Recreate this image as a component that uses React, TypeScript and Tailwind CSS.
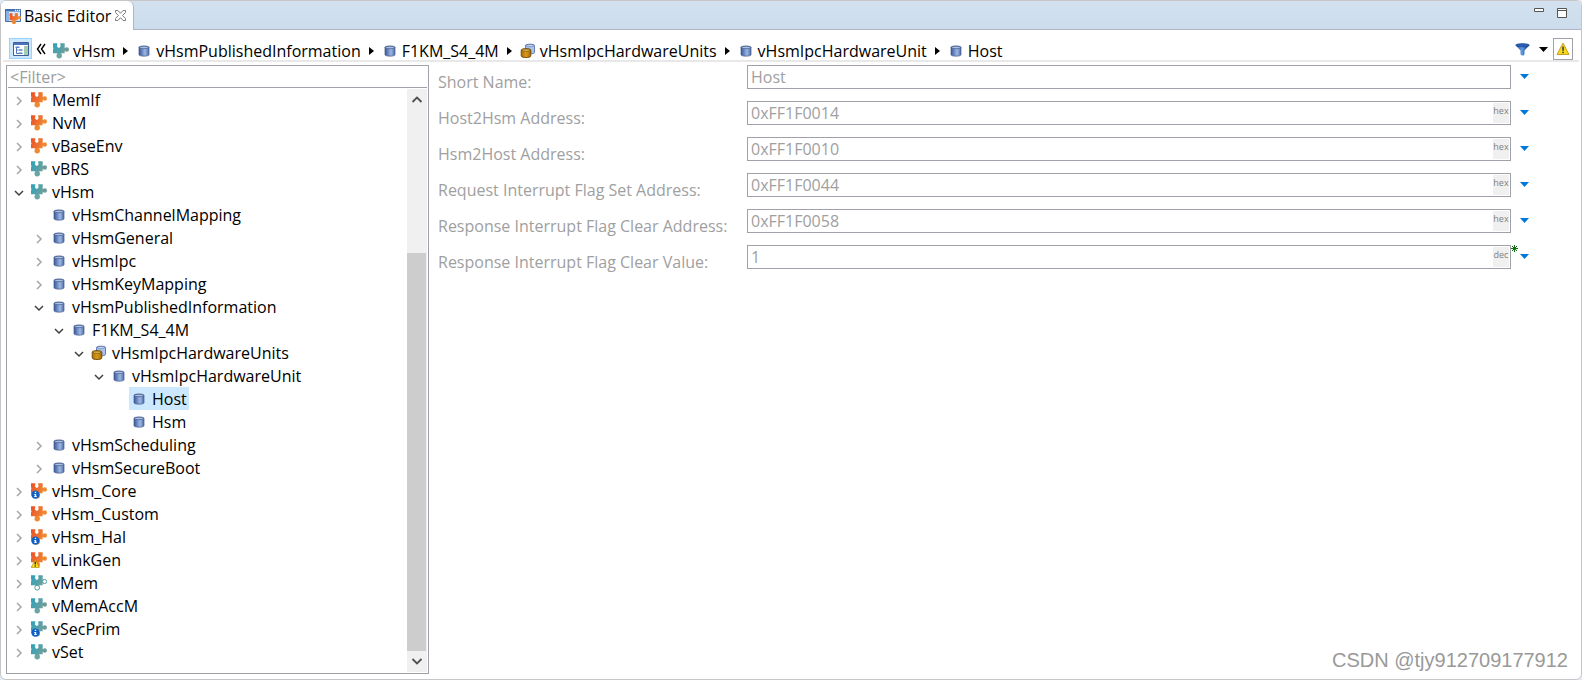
import { useState } from "react"

type IconKind = "module" | "service" | "serviceOpen" | "container" | "containers"
type Overlay = "info" | "warning"

interface TreeNode {
  name: string
  level: number
  icon: IconKind
  overlay?: Overlay
  state?: "open" | "closed"
}

interface Parameter {
  id: string
  label: string
  value: string
  format?: "hex" | "dec"
  modified?: boolean
}

const nodes: TreeNode[] = [
  { name: "MemIf", level: 0, icon: "module", state: "closed" },
  { name: "NvM", level: 0, icon: "module", state: "closed" },
  { name: "vBaseEnv", level: 0, icon: "module", state: "closed" },
  { name: "vBRS", level: 0, icon: "service", state: "closed" },
  { name: "vHsm", level: 0, icon: "service", state: "open" },
  { name: "vHsmChannelMapping", level: 1, icon: "container" },
  { name: "vHsmGeneral", level: 1, icon: "container", state: "closed" },
  { name: "vHsmIpc", level: 1, icon: "container", state: "closed" },
  { name: "vHsmKeyMapping", level: 1, icon: "container", state: "closed" },
  { name: "vHsmPublishedInformation", level: 1, icon: "container", state: "open" },
  { name: "F1KM_S4_4M", level: 2, icon: "container", state: "open" },
  { name: "vHsmIpcHardwareUnits", level: 3, icon: "containers", state: "open" },
  { name: "vHsmIpcHardwareUnit", level: 4, icon: "container", state: "open" },
  { name: "Host", level: 5, icon: "container" },
  { name: "Hsm", level: 5, icon: "container" },
  { name: "vHsmScheduling", level: 1, icon: "container", state: "closed" },
  { name: "vHsmSecureBoot", level: 1, icon: "container", state: "closed" },
  { name: "vHsm_Core", level: 0, icon: "module", overlay: "info", state: "closed" },
  { name: "vHsm_Custom", level: 0, icon: "module", state: "closed" },
  { name: "vHsm_Hal", level: 0, icon: "module", overlay: "info", state: "closed" },
  { name: "vLinkGen", level: 0, icon: "module", overlay: "warning", state: "closed" },
  { name: "vMem", level: 0, icon: "serviceOpen", state: "closed" },
  { name: "vMemAccM", level: 0, icon: "service", state: "closed" },
  { name: "vSecPrim", level: 0, icon: "service", overlay: "info", state: "closed" },
  { name: "vSet", level: 0, icon: "service", state: "closed" },
]

const crumbs: { name: string; icon: IconKind }[] = [
  { name: "vHsm", icon: "service" },
  { name: "vHsmPublishedInformation", icon: "container" },
  { name: "F1KM_S4_4M", icon: "container" },
  { name: "vHsmIpcHardwareUnits", icon: "containers" },
  { name: "vHsmIpcHardwareUnit", icon: "container" },
  { name: "Host", icon: "container" },
]

const parameters: Parameter[] = [
  { id: "short-name", label: "Short Name:", value: "Host" },
  { id: "host2hsm", label: "Host2Hsm Address:", value: "0xFF1F0014", format: "hex" },
  { id: "hsm2host", label: "Hsm2Host Address:", value: "0xFF1F0010", format: "hex" },
  { id: "request-set", label: "Request Interrupt Flag Set Address:", value: "0xFF1F0044", format: "hex" },
  { id: "response-clear", label: "Response Interrupt Flag Clear Address:", value: "0xFF1F0058", format: "hex" },
  { id: "clear-value", label: "Response Interrupt Flag Clear Value:", value: "1", format: "dec", modified: true },
]

const indent = ["pl-[3px]", "pl-[23px]", "pl-[43px]", "pl-[63px]", "pl-[83px]", "pl-[103px]"]

function PuzzleShape({ kind }: { kind: "module" | "service" | "serviceOpen" }) {
  const fill = kind === "module" ? "url(#puzzle-orange)" : "url(#puzzle-teal)"
  return (
    <>
      <path
        d="M0 .3h4.300v1.500a1.800 1.800 0 1 0 3 0V.3H11.700v4.900h1.300v2.600h-1.300V10.200H8.200v1.500H4.200v-1.500H0V6.500l.5-1.300L0 3.900z"
        fill={fill}
      />
      {kind === "serviceOpen" ? (
        <g fill="#fff" stroke="#4f9c9e">
          <circle cx="13.500" cy="6.500" r="2.100" />
          <circle cx="6.200" cy="12.700" r="2.400" />
        </g>
      ) : (
        <g>
          <circle cx="13.800" cy="6.500" r="2.200" fill={kind === "module" ? "#ef8a35" : "#6d9c98"} />
          <circle cx="6.200" cy="12.700" r="2.700" fill={kind === "module" ? "#f08a30" : "#6aa5a5"} />
        </g>
      )}
    </>
  )
}

function NodeIcon({ kind, overlay }: { kind: IconKind; overlay?: Overlay }) {
  return (
    <svg viewBox="0 0 16 16" className="size-4 shrink-0" aria-hidden="true">
      {kind === "container" && (
        <>
          <path d="M3 4.2C3 2.6 13 2.6 13 4.2v7.6c0 1.8-10 1.8-10 0z" fill="url(#cylinder-blue)" stroke="#41598f" strokeWidth=".7" />
          <ellipse cx="8" cy="4.5" rx="4.4" ry="1.2" fill="#a9c1e4" stroke="#3d4f80" strokeWidth=".6" />
        </>
      )}
      {kind === "containers" && (
        <>
          <path d="M5.5 2.4C5.5.8 14.5.8 14.5 2.4v7.2c0 1.6-9 1.6-9 0z" fill="#a8c4ec" stroke="#49659d" strokeWidth=".8" />
          <ellipse cx="10" cy="2.7" rx="3.8" ry="1" fill="#d2e1f7" stroke="#49659d" strokeWidth=".5" />
          <path d="M1.2 7c0-1.8 9.6-1.8 9.6 0v6c0 2-9.6 2-9.6 0z" fill="url(#cylinder-gold)" stroke="#6b4705" strokeWidth=".9" />
          <ellipse cx="6" cy="7.2" rx="4" ry="1.1" fill="#e9bd5c" stroke="#6b4705" strokeWidth=".6" />
        </>
      )}
      {(kind === "module" || kind === "service" || kind === "serviceOpen") && <PuzzleShape kind={kind} />}
      {overlay === "info" && (
        <>
          <circle cx="4.4" cy="11.6" r="4.2" fill="#0f5fc4" />
          <path d="M3.8 8.8h1.4v1.3H3.8zM3.1 10.9h2.1v2.3h.7v.9H3.1v-.9h.7v-1.4h-.7z" fill="#fff" />
        </>
      )}
      {overlay === "warning" && (
        <>
          <path d="M4.2 7.8 8.3 15.4H.2z" fill="#ffe21a" stroke="#b08c00" strokeWidth=".7" />
          <path d="M3.6 9.8h1.3v2.7H3.6zM3.6 13.2h1.3v1.2H3.6z" fill="#222" />
        </>
      )}
    </svg>
  )
}

function Gradients() {
  return (
    <svg className="absolute size-0" aria-hidden="true">
      <defs>
        <linearGradient id="puzzle-orange" x1="0" y1="0" x2="1" y2="0.4">
          <stop offset="0" stopColor="#e8502a" />
          <stop offset="1" stopColor="#f08432" />
        </linearGradient>
        <linearGradient id="puzzle-teal" x1="0" y1="0" x2="1" y2="0.5">
          <stop offset="0" stopColor="#2aa3bd" />
          <stop offset="1" stopColor="#6d9f9d" />
        </linearGradient>
        <linearGradient id="cylinder-blue">
          <stop offset="0" stopColor="#3c5796" />
          <stop offset=".35" stopColor="#6f8fc6" />
          <stop offset=".6" stopColor="#9db8e0" />
          <stop offset="1" stopColor="#4f6cab" />
        </linearGradient>
        <linearGradient id="cylinder-gold">
          <stop offset="0" stopColor="#a86f08" />
          <stop offset=".5" stopColor="#d99a1c" />
          <stop offset="1" stopColor="#a56c05" />
        </linearGradient>
        <linearGradient id="funnel-blue">
          <stop offset="0" stopColor="#1d4fa6" />
          <stop offset=".45" stopColor="#5f9be0" />
          <stop offset="1" stopColor="#0f2f78" />
        </linearGradient>
      </defs>
    </svg>
  )
}

function Twisty({ node }: { node: TreeNode }) {
  if (!node.state) return <span className="w-[22px] shrink-0" />
  return (
    <button
      type="button"
      aria-label={`${node.state === "open" ? "Collapse" : "Expand"} ${node.name}`}
      className="flex w-[22px] shrink-0 items-center pl-1"
    >
      <svg viewBox="0 0 10 10" className="mt-[2px] size-[10px]" fill="none" aria-hidden="true">
        {node.state === "open" ? (
          <path d="M1 3l4 4 4-4" stroke="#404040" strokeWidth="1.5" />
        ) : (
          <path d="M3 1l4 4-4 4" stroke="#a6a6a6" strokeWidth="1.5" />
        )}
      </svg>
    </button>
  )
}

function TabBar() {
  return (
    <header className="flex h-[29px] shrink-0 justify-between border-b border-[#b0b4c6] bg-linear-to-b from-[#d3e1ef] to-[#cbdcec]">
      <div className="-mb-px flex w-[133px] items-center gap-[3px] rounded-tr-md border-r border-[#b0b4c6] bg-white pl-1">
        <svg viewBox="0 0 16 16" className="size-4 shrink-0" aria-hidden="true">
          <path d="M.5 1.5h15v12H.5z" fill="#dcebfa" stroke="#4a6ea8" />
          <path d="M0 1h16v2.5H0z" fill="#3f6fb5" />
          <path d="M10 1.7h1.2v1.2H10zM12 1.7h1.2v1.2H12zM14 1.7h1.2v1.2H14z" fill="#fff" />
          <path d="M1 4h3v9H1z" fill="#8ab4e6" />
          <g transform="translate(4.5 5) scale(.72)">
            <PuzzleShape kind="module" />
          </g>
        </svg>
        <span className="whitespace-nowrap">Basic Editor</span>
        <button type="button" aria-label="Close Basic Editor" className="ml-px">
          <svg viewBox="0 0 12 12" className="size-[11px]" fill="#fff" stroke="#707070" aria-hidden="true">
            <path d="M.5.5h2.7L6 3.6 8.8.5h2.7v2.2L8.3 6l3.2 3.3v2.2H8.8L6 8.4l-2.8 3.1H.5V9.3L3.7 6 .5 2.7z" />
          </svg>
        </button>
      </div>
      <div className="flex items-start gap-3 pt-[7px] pr-[13px]">
        <button type="button" aria-label="Minimize">
          <svg viewBox="0 0 11 11" className="size-[11px]" aria-hidden="true">
            <path d="M.5.5h9v3h-9z" fill="#fff" stroke="#555" />
          </svg>
        </button>
        <button type="button" aria-label="Maximize">
          <svg viewBox="0 0 11 11" className="size-[11px]" aria-hidden="true">
            <path d="M.5.5h9v9h-9zM.5 2.5h9" fill="#fff" stroke="#555" />
          </svg>
        </button>
      </div>
    </header>
  )
}

function Breadcrumbs() {
  return (
    <div className="mx-[2px] flex h-8 shrink-0 items-start overflow-hidden border-b-2 border-[#e8e8e8] pt-2 pr-[6px] pl-[6px]">
      <button
        type="button"
        aria-label="Show tree"
        className="flex h-[21px] w-[23px] shrink-0 items-center justify-center border border-[#99d1ff] bg-[#cce8ff]"
      >
        <svg viewBox="0 0 16 14" className="h-[14px] w-4" aria-hidden="true">
          <path d="M.5.5h15v13H.5z" fill="#fff" stroke="#3d5f9c" />
          <path d="M1 1h14v2H1z" fill="#4d74b8" />
          <path d="M11 4h4v9h-4z" fill="#a3cdb0" />
          <path d="M3.5 5v6.5H6M3.5 8H5" stroke="#5479b8" fill="none" />
          <path d="M2.5 4.5h4v1.6h-4zM5.5 7.3h4v1.5h-4zM5.5 10.5h4V12h-4z" fill="#5c83c4" />
        </svg>
      </button>
      <button type="button" aria-label="Show hidden levels" className="ml-1 flex h-[21px] w-[17px] shrink-0 items-center">
        <svg viewBox="0 0 10 12" className="h-3 w-[10px]" fill="none" stroke="#000" strokeWidth="1.4" aria-hidden="true">
          <path d="M5 1L1.5 6 5 11M9 1L5.500 6 9 11" />
        </svg>
      </button>
      <nav aria-label="Breadcrumb" className="flex min-w-0 flex-1">
        {crumbs.map((crumb, index) => (
          <div key={crumb.name} className="flex shrink-0 items-start">
            {index > 0 && (
              <svg viewBox="0 0 5 8" className="mx-2 mt-[9px] h-2 w-[5px]" aria-hidden="true">
                <path d="M0 0l5 4-5 4z" />
              </svg>
            )}
            <a href="#" className="flex items-start gap-1">
              <span className="pt-[5px]">
                <NodeIcon kind={crumb.icon} />
              </span>
              <span className="leading-[26px]">{crumb.name}</span>
            </a>
          </div>
        ))}
      </nav>
      <div className="flex shrink-0 items-center">
        <button type="button" aria-label="Filter parameters" className="mr-[9px]">
          <svg viewBox="0 0 15 13" className="h-[13px] w-[15px]" aria-hidden="true">
            <path d="M.8 2.500L5.500 7.600v3.600l1.400 1.300h1.600l1-1.300V7.600L14.200 2.500z" fill="url(#funnel-blue)" />
            <ellipse cx="7.500" cy="2.200" rx="6.900" ry="1.600" fill="#2b5fb4" stroke="#173f8c" strokeWidth=".6" />
          </svg>
        </button>
        <button type="button" aria-label="Filter menu" className="mr-[5px]">
          <svg viewBox="0 0 9 5" className="h-[5px] w-[9px]" aria-hidden="true">
            <path d="M0 0h9L4.500 5z" />
          </svg>
        </button>
        <button
          type="button"
          aria-label="Warnings"
          className="flex h-[22px] w-5 items-center justify-center border border-[#a0a0a8] bg-white"
        >
          <svg viewBox="0 0 14 14" className="size-[14px]" aria-hidden="true">
            <path d="M7 1L13 12.500H1z" fill="#f7d917" stroke="#c9a227" strokeLinejoin="round" />
            <path d="M6.300 4.500h1.500v4.300H6.300zM6.300 9.800h1.500v1.500H6.300z" fill="#33334d" />
          </svg>
        </button>
      </div>
    </div>
  )
}

function ScrollBar() {
  return (
    <div className="my-px mr-px flex w-5 shrink-0 flex-col bg-[#f0f0f0]" aria-hidden="true">
      <svg viewBox="0 0 20 21" className="h-[21px] w-5" fill="none" stroke="#505050" strokeWidth="1.800">
        <path d="M5.500 13L10 8.500 14.500 13" />
      </svg>
      <div className="flex-[143]" />
      <div className="mr-px flex-[398] bg-[#cdcdcd]" />
      <svg viewBox="0 0 20 21" className="h-[21px] w-5" fill="none" stroke="#505050" strokeWidth="1.800">
        <path d="M5.500 8L10 12.500 14.500 8" />
      </svg>
    </div>
  )
}

function ConfigTree() {
  const [selected, setSelected] = useState("Host")

  return (
    <section className="flex w-[423px] shrink-0 flex-col border border-[#a0a0a8]">
      <input
        type="text"
        aria-label="Filter"
        placeholder="<Filter>"
        className="mx-px h-[22px] border-b border-[#a0a0a8] px-[2px] outline-none placeholder:text-[#9d9d9d]"
      />
      <div className="flex flex-1">
        <ul className="min-w-0 flex-1">
          {nodes.map((node) => (
            <li key={node.name} className={`flex h-[23px] ${indent[node.level]}`}>
              <Twisty node={node} />
              <button
                type="button"
                onClick={() => setSelected(node.name)}
                className={`-ml-[3px] flex items-center gap-[5px] pr-[2px] pl-[2px] ${
                  selected === node.name ? "bg-[#cce8ff]" : ""
                }`}
              >
                <NodeIcon kind={node.icon} overlay={node.overlay} />
                <span className="whitespace-nowrap">{node.name}</span>
              </button>
            </li>
          ))}
        </ul>
        <ScrollBar />
      </div>
    </section>
  )
}

function ParameterRow({ parameter }: { parameter: Parameter }) {
  return (
    <div className="flex h-6">
      <label htmlFor={parameter.id} className="w-[309px] shrink-0 pt-[7px] whitespace-nowrap text-[#a0a0a0]">
        {parameter.label}
      </label>
      <div className="flex min-w-0 flex-1 border border-[#a0a0a8] p-px">
        <input
          id={parameter.id}
          type="text"
          defaultValue={parameter.value}
          disabled
          className="min-w-0 flex-1 px-[2px] text-[#a0a0a0]"
        />
        {parameter.format && (
          <span className="w-4 bg-[#f0f0f0] text-center text-[9px] leading-4 text-[#808080]">{parameter.format}</span>
        )}
      </div>
      <div className="flex w-[9px] shrink-0 justify-start">
        {parameter.modified && (
          <svg viewBox="0 0 7 7" className="size-[7px]" stroke="#107010" aria-label="Modified" role="img">
            <path d="M3.500 0v7M0 3.500h7M1 1l5 5M6 1L1 6" />
          </svg>
        )}
      </div>
      <button type="button" aria-label={`Menu for ${parameter.label}`} className="flex w-[9px] shrink-0 items-center pb-[2px]">
        <svg viewBox="0 0 9 5" className="h-[5px] w-[9px]" aria-hidden="true">
          <path d="M0 0h9L4.500 5z" fill="#0078d7" />
        </svg>
      </button>
    </div>
  )
}

export default function App() {
  return (
    <div className="flex min-h-screen bg-[#e4ebf8] font-['Open_Sans','Noto_Sans_CJK_SC',sans-serif] text-[16px] leading-5 text-black">
      <Gradients />
      <main className="relative flex min-w-0 flex-1 flex-col overflow-hidden rounded-md border border-[#c6c6c8] bg-white">
        <TabBar />
        <Breadcrumbs />
        <div className="flex flex-1 pt-[3px] pr-[52px] pb-[5px] pl-[5px]">
          <ConfigTree />
          <form className="ml-[9px] flex min-w-0 flex-1 flex-col gap-3">
            {parameters.map((parameter) => (
              <ParameterRow key={parameter.id} parameter={parameter} />
            ))}
          </form>
        </div>
        <p className="absolute right-[13px] bottom-[7px] font-['Liberation_Sans',sans-serif] text-[20px] leading-6 text-[#999]">
          CSDN @tjy912709177912
        </p>
      </main>
    </div>
  )
}
